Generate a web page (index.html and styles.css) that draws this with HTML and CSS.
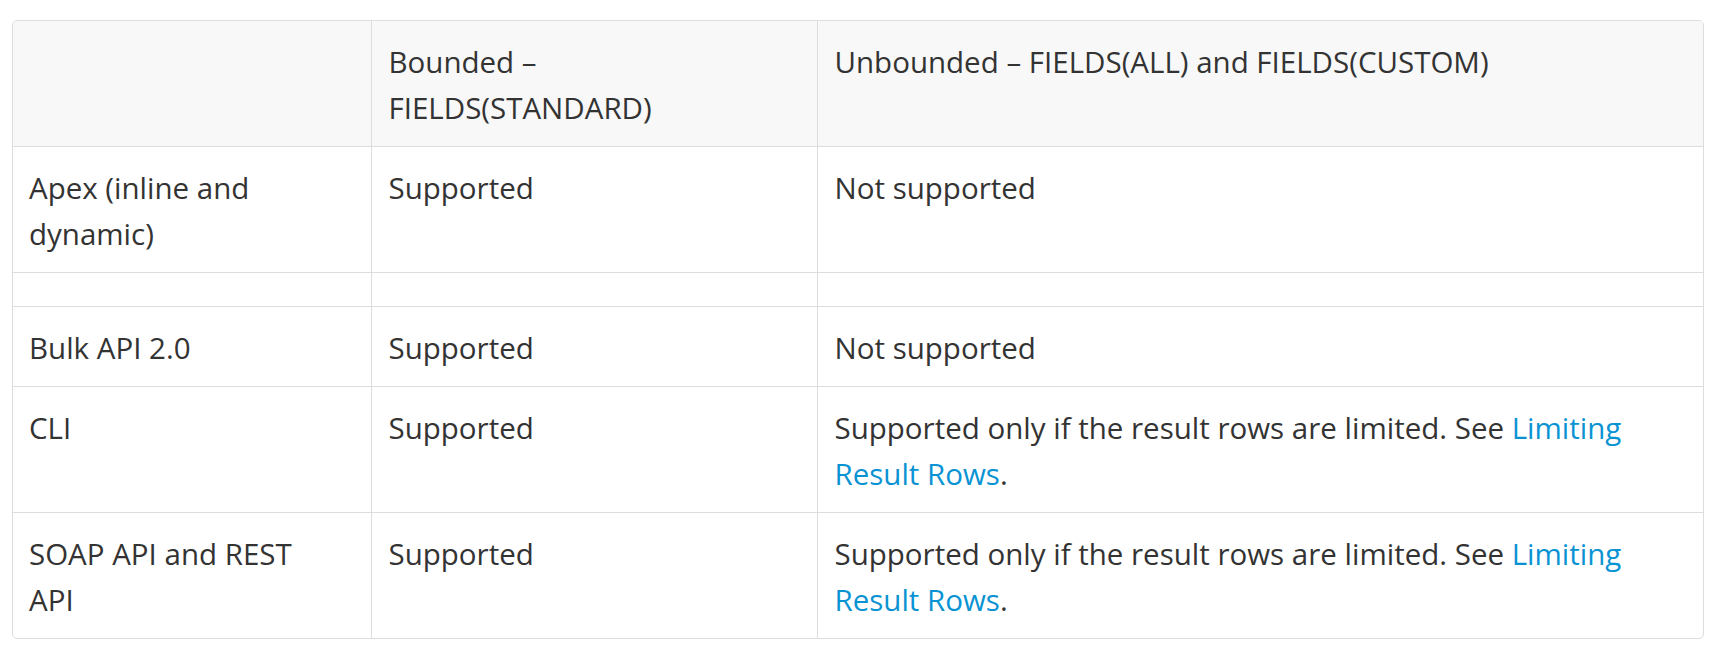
FILE: index.html
```html
<!DOCTYPE html>
<html>
<head>
<meta charset="utf-8">
<link rel="stylesheet" href="styles.css">
</head>
<body>
<div class="page">
  <div class="table-wrap">
    <table class="support">
      <colgroup>
        <col class="c1">
        <col class="c2">
        <col class="c3">
      </colgroup>
      <thead>
        <tr>
          <th></th>
          <th>Bounded – FIELDS(STANDARD)</th>
          <th>Unbounded – FIELDS(ALL) and FIELDS(CUSTOM)</th>
        </tr>
      </thead>
      <tbody>
        <tr>
          <td>Apex (inline and dynamic)</td>
          <td>Supported</td>
          <td>Not supported</td>
        </tr>
        <tr class="empty">
          <td></td>
          <td></td>
          <td></td>
        </tr>
        <tr>
          <td>Bulk API 2.0</td>
          <td>Supported</td>
          <td>Not supported</td>
        </tr>
        <tr>
          <td>CLI</td>
          <td>Supported</td>
          <td>Supported only if the result rows are limited. See <a href="#">Limiting Result Rows</a>.</td>
        </tr>
        <tr>
          <td>SOAP API and REST API</td>
          <td>Supported</td>
          <td>Supported only if the result rows are limited. See <a href="#">Limiting Result Rows</a>.</td>
        </tr>
      </tbody>
    </table>
  </div>
</div>
</body>
</html>
```

FILE: styles.css
```css
html, body {
  margin: 0;
  padding: 0;
  background: #ffffff;
}

.page {
  padding: 20px 10px 8px 12px;
  font-family: "Open Sans", "Noto Sans", sans-serif;
  color: #333333;
}

.table-wrap {
  border: 1px solid #dddddd;
  border-radius: 5px;
  overflow: hidden;
}

.support {
  width: 100%;
  border-collapse: collapse;
  table-layout: fixed;
  font-size: 29.5px;
  line-height: 46px;
}

.c1 { width: 358px; }
.c2 { width: 446px; }

.support th,
.support td {
  text-align: left;
  vertical-align: top;
  font-weight: normal;
  padding: 18px 26px 15px 17px;
  border-left: 1px solid #dddddd;
  border-top: 1px solid #dddddd;
}

.support tr > :first-child {
  border-left: none;
  padding-left: 16px;
  padding-right: 50px;
}

.support thead th {
  background: #f8f8f8;
  border-top: none;
}

.support a {
  color: #0a93d3;
  text-decoration: none;
}
```
